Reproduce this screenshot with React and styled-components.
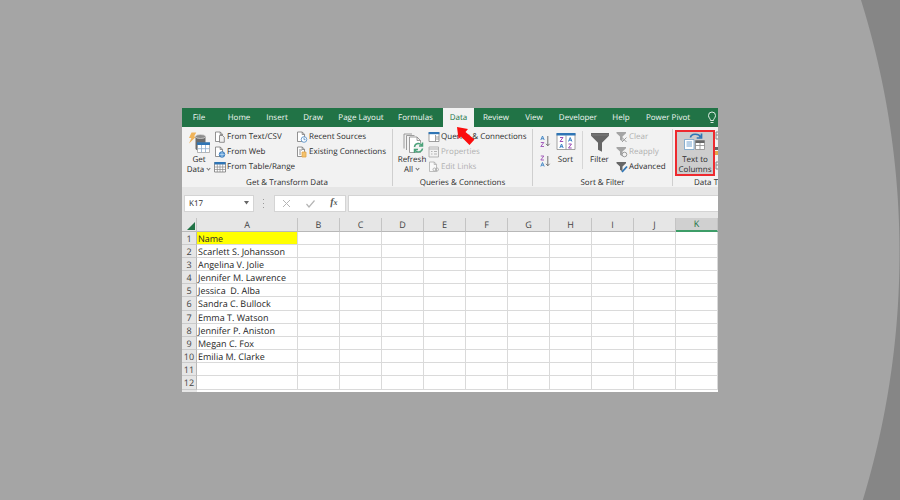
import React from "react";
import styled, { createGlobalStyle, css } from "styled-components";

const GlobalStyle = createGlobalStyle`
  * { box-sizing: border-box; }
  body { margin: 0; background: #a5a5a5; font-family: "Open Sans", "Noto Sans", sans-serif; text-rendering: geometricPrecision; }
  button, input, select { font: inherit; color: inherit; text-rendering: inherit; margin: 0; padding: 0; border: 0; background: none; }
`;

const Page = styled.main`
  min-height: 100vh;
  padding: 108px 182px;
  background: radial-gradient(circle at calc(100% - 850px) 253px, #a5a5a5 849px, #868686 850px);
`;
const Workbook = styled.section`
  background: #fff;
  color: #2b2b2b;
  font-size: 8px;
  line-height: 10px;
  overflow: hidden;
`;

/* Ribbon tabs */
const TabBar = styled.nav`
  display: grid;
  grid-template-columns: 34fr 46fr 30fr 42fr 54fr 55fr 31fr 44fr 32fr 56fr 30fr 64fr 18fr;
  height: 19px;
  background: #217346;
`;
const Tab = styled.button`
  position: relative;
  display: flex;
  align-items: center;
  justify-content: center;
  white-space: nowrap;
  && { color: #f2f8f4; }
  ${(p) => p.$active && css`
    && { background: #f2f2f2; color: #217346; }
  `}
`;
const Pointer = styled.svg`
  position: absolute;
  z-index: 2;
  left: 13px;
  top: 18px;
  width: 20px;
  height: 20px;
`;

/* Ribbon */
const Ribbon = styled.div`
  display: grid;
  grid-template-columns: 211fr 140fr 140fr 45fr;
  height: 60px;
  padding-top: 2px;
  background: #f2f2f2;
`;
const Group = styled.section`
  display: flex;
  flex-direction: column;
  min-width: 0;
  height: 57px;
  border-right: 1px solid ${(p) => (p.$last ? "transparent" : "#cfcfcf")};
`;
const Tools = styled.div`
  display: flex;
  flex: none;
  height: 49px;
  padding-left: ${(p) => p.$inset || 0}px;
`;
const GroupLabel = styled.div`
  padding-left: ${(p) => p.$inset || 0}px;
  text-align: ${(p) => (p.$inset ? "left" : "center")};
  white-space: nowrap;
`;
const BigButton = styled.button`
  display: flex;
  flex: none;
  flex-direction: column;
  align-items: center;
  width: ${(p) => p.$w}px;
  height: 47px;
  && { padding-top: 2px; }
  white-space: nowrap;
  svg { width: 24px; height: 24px; flex: none; }
  ${(p) => p.$marked && css`
    && { background: #cdcdcd; margin-top: 2px; padding-top: 0; }
    height: 44px;
    outline: 2px solid #ee2a2f;
    outline-offset: -1px;
  `}
`;
const Stack = styled.div`
  display: flex;
  flex: none;
  flex-direction: column;
  width: ${(p) => p.$w}px;
`;
const SmallButton = styled.button`
  display: flex;
  align-items: center;
  gap: 1px;
  height: 15px;
  white-space: nowrap;
  && { color: ${(p) => (p.$off ? "#b0b0b0" : "inherit")}; }
  svg { width: 12px; height: 12px; flex: none; opacity: ${(p) => (p.$off ? 0.55 : 1)}; }
`;
const SortStack = styled.div`
  display: flex;
  flex: none;
  flex-direction: column;
  gap: 8px;
  width: 12px;
  padding-top: 6px;
`;
const IconButton = styled.button`
  display: flex;
  svg { width: 12px; height: 12px; }
`;
const Divider = styled.div`
  width: 1px;
  height: 38px;
  flex: none;
  margin: 2px 0 0 3px;
  background: #d6d6d6;
`;

/* Formula bar */
const FormulaBar = styled.div`
  display: flex;
  align-items: center;
  height: 31px;
  padding: 1px 0 0 2px;
  background: #e6e6e6;
`;
const NameBox = styled.label`
  display: flex;
  align-items: center;
  width: 70px;
  height: 17px;
  padding: 0 4px;
  background: #fff;
  border: 1px solid #d4d4d4;
  select { appearance: none; flex: 1; outline: none; height: 15px; line-height: 15px; }
  svg { width: 5px; height: 4px; }
`;
const Grip = styled.svg`
  width: 3px;
  height: 9px;
  margin: 0 9px 0 8px;
`;
const EntryButtons = styled.div`
  display: flex;
  align-items: center;
  justify-content: space-around;
  width: 72px;
  height: 17px;
  margin-right: 2px;
  background: #fff;
  border: 1px solid #d4d4d4;
  svg { display: block; width: 9px; height: 9px; }
`;
const FxButton = styled.button`
  && { font: italic bold 10px/12px "Liberation Serif", serif; color: #555; }
  small { font-size: 8px; }
`;
const FormulaInput = styled.input`
  flex: 1;
  min-width: 0;
  height: 17px;
  && { background: #fff; border: 1px solid #d4d4d4; border-right: 0; }
`;

/* Worksheet */
const Sheet = styled.table`
  width: 100%;
  table-layout: fixed;
  border-collapse: separate;
  border-spacing: 0;
  color: #262626;
  font-size: 9px;
`;
const IndexCol = styled.col`width: 15px;`;
const NameCol = styled.col`width: 101px;`;
const ColumnHead = styled.th`
  height: 14px;
  padding: 0;
  font-weight: 400;
  background: ${(p) => (p.$selected ? "#d0d0d0" : "#e6e6e6")};
  color: ${(p) => (p.$selected ? "#217346" : "#444")};
  border-right: 1px solid #c4c4c4;
  border-bottom: 1px solid #b8b8b8;
  ${(p) => p.$selected && css`border-bottom: 2px solid #3d9d68;`}
  svg { display: block; width: 8px; height: 8px; margin: 3px 0 0 5px; }
`;
const RowHead = styled.th`
  height: ${(p) => (p.$tall ? 14 : 13)}px;
  padding: 1px 0 0;
  font-weight: 400;
  background: #e6e6e6;
  color: #444;
  border-right: 1px solid #b8b8b8;
  border-bottom: 1px solid #cbcbcb;
`;
const Cell = styled.td`
  padding: 1px 1px 0;
  white-space: pre;
  background: ${(p) => (p.$fill ? "#ffff00" : "#fff")};
  border-right: 1px solid #dadada;
  border-bottom: 1px solid #dadada;
`;
const SheetEdge = styled.div`
  height: 2px;
  background: linear-gradient(90deg, #e6e6e6 15px, #fff 15px);
`;

/* Icons */
const Doc = ({ children }) => (
  <svg viewBox="0 0 12 12" fill="none" stroke="#777" strokeWidth="0.8">
    <path d="M1.5 1h4.8l2.2 2.3v7.2h-7zM6.2 1v2.5h2.3" fill="#fff" />
    {children}
  </svg>
);
const CsvIcon = () => <Doc><path d="M5.5 4.5h3l1.8 1.8v5H5.5z" fill="#eee" /></Doc>;
const WebIcon = () => (
  <Doc><circle cx="8" cy="8.5" r="2.8" fill="#5b9bd5" stroke="#3274b5" /><path d="M5.5 8.5h5M8 6v5" stroke="#e4f0fa" strokeWidth="0.5" /></Doc>
);
const RecentIcon = () => (
  <Doc><circle cx="8" cy="8.5" r="2.8" fill="#fff" stroke="#4a88c4" /><path d="M8 6.8v1.9h1.5" stroke="#4a88c4" /></Doc>
);
const ExistingIcon = () => (
  <Doc><path d="M3 4h3M3 6h2M3 8h2" /><path d="M6 6h4v5H6z" fill="#f3c26d" stroke="#e3a64a" /></Doc>
);
const TableIcon = () => (
  <svg viewBox="0 0 12 12" fill="none"><path d="M.5 1.5h11V11H.5z" fill="#fff" stroke="#777" strokeWidth=".8" /><path d="M.5 1h11v2.5H.5z" fill="#2f75b5" /><path d="M3.3 3v8M6 3v8M8.7 3v8M.5 6h11M.5 8.5h11" stroke="#888" strokeWidth=".7" /></svg>
);
const QueriesIcon = () => (
  <svg viewBox="0 0 12 12" fill="none"><path d="M1 1.5h10v9H1zM7.5 4v6.5M8 6h3M8 8h3" fill="#fff" stroke="#888" strokeWidth=".8" /><path d="M.6 1h10.8v2.2H.6z" fill="#2f75b5" /></svg>
);
const PropertiesIcon = () => (
  <svg viewBox="0 0 12 12" fill="none" stroke="#777" strokeWidth=".9"><path d="M1 1h9.5v10H1zM1 3h9.5M3 5.5h1.5M6 5.5h3M3 8h1.5M6 8h3" /></svg>
);
const LinksIcon = () => <Doc><path d="M5 8.5c0-2 3-2 3 0s-3 2-3 0M7.5 8.5c0-2 3-2 3 0s-3 2-3 0" strokeWidth="1" /></Doc>;
const FunnelIcon = ({ children }) => (
  <svg viewBox="0 0 12 12" fill="none"><path d="M.5 1H10v1.3L6.5 5.5v5L4 8.8V5.5L.5 2.3z" fill="#666" />{children}</svg>
);
const GetDataIcon = () => (
  <svg viewBox="0 0 24 23" fill="none">
    <path d="M4.5 1h4.8L7 5h2.3L2 12l2.4-5.5H2z" fill="#f0b45a" />
    <path d="M8.5 5v12c0 3 10 3 10 0V5z" fill="#6b6b6b" /><ellipse cx="13.5" cy="5" rx="5" ry="2" fill="#8d8d8d" stroke="#ddd" strokeWidth=".7" />
    <path d="M10.500 11.500h12V21h-12z" fill="#fff" stroke="#999" strokeWidth=".7" /><path d="M10 10.800h13v2.700H10z" fill="#2f75b5" />
    <path d="M14.500 13.500V21M18.500 13.500V21M10.500 17.200h12" stroke="#8baed0" strokeWidth=".8" />
  </svg>
);
const RefreshIcon = () => (
  <svg viewBox="0 0 24 23" fill="none" stroke="#858585" strokeWidth=".8">
    <path d="M4 17V2.500h8" /><path d="M6.500 18.500V4h8" />
    <path d="M9.500 5.500h7.500l3.500 3.500v12h-11zM17 5.500V9h3.500" fill="#fff" />
    <circle cx="18.500" cy="16" r="5" fill="#f2f2f2" stroke="none" />
    <path d="M14.500 15.500c.5-4.500 6-4.500 7.500-1.500M22.500 11v3.500H19M22.500 17c-.5 4-6 4.500-7.500 1.500M14.500 21.500V18H18" stroke="#4ba27a" strokeWidth="1.500" />
  </svg>
);
const letterA = "l1.700-4 1.700 4m-2.800-1.300h2.200";
const letterZ = "h3l-3 4h3.200";
const SortIcon = () => (
  <svg viewBox="0 0 24 23" fill="none">
    <path d="M3 2h18v16H3zM12 4v14" fill="#fff" stroke="#8c8c8c" strokeWidth=".8" /><path d="M2.500 1.500h19V4h-19z" fill="#2f75b5" />
    <path d={`M6 6${letterZ}M14.500 12.500${letterZ}`} stroke="#9b4fb5" /><path d={`M5.800 16.500${letterA}M14.500 10${letterA}`} stroke="#3b82c4" />
  </svg>
);
const OrderIcon = ({ desc }) => (
  <svg viewBox="0 0 12 12" fill="none" strokeWidth=".9">
    <path d={`M.8 ${desc ? 11.5 : 5}${letterA}`} stroke="#3b82c4" /><path d={`M.8 ${desc ? 1 : 7.5}${letterZ}`} stroke="#9b4fb5" />
    <path d="M7.800 1v9.500M6 8.800l1.800 2 1.800-2" stroke="#666" />
  </svg>
);
const FilterIcon = () => (
  <svg viewBox="0 0 24 23"><path d="M3 1.500h18v2.700l-7 7v9l-4-2v-7l-7-7z" fill="#666" /><path d="M3 3.500h18" stroke="#888" strokeWidth=".7" /></svg>
);
const SplitIcon = () => (
  <svg viewBox="0 0 24 23" fill="none">
    <path d="M1.500 8h9.500v10H1.500z" fill="#fff" stroke="#6f9fc8" strokeWidth=".8" /><path d="M3.500 10.500h5.500M3.500 12.500h5.500M3.500 14.500h5.500" stroke="#4b8bc4" strokeWidth=".8" />
    <path d="M12.500 9h9v9h-9zM17 11v7M12.500 14h9" fill="#fff" stroke="#8b8b8b" strokeWidth=".8" /><path d="M12.500 9h9v2.500h-9z" fill="#666" />
    <path d="M7.500 6c.5-4 8-4.500 10-.5M18.500 2v4.500h-4.800" stroke="#2f75b5" strokeWidth="1.700" />
  </svg>
);
const Caret = styled.span`
  display: inline-block;
  width: 3px;
  height: 3px;
  margin: 0 1px 2px 3px;
  border: solid #777;
  border-width: 0 1px 1px 0;
  rotate: 45deg;
`;
const PeekIcons = styled.svg`
  width: 4px;
  height: 45px;
  flex: none;
`;
const Bulb = styled.svg`
  width: 10px;
  height: 13px;
  flex: none;
  margin-left: 6px;
`;

const tabs = ["File", "Home", "Insert", "Draw", "Page Layout", "Formulas", "Data", "Review", "View", "Developer", "Help", "Power Pivot"];
const columns = "ABCDEFGHIJK".split("");
const names = ["Name", "Scarlett S. Johansson", "Angelina V. Jolie", "Jennifer M. Lawrence", "Jessica  D. Alba", "Sandra C. Bullock", "Emma T. Watson", "Jennifer P. Aniston", "Megan C. Fox", "Emilia M. Clarke", "", ""];

export default function App() {
  return (
    <Page>
      <GlobalStyle />
      <Workbook>
        <TabBar>
          {tabs.map((t) => (
            <Tab key={t} $active={t === "Data"}>
              {t}
              {t === "Data" && (
                <Pointer viewBox="0 0 20 20"><path d="M1 1l11 2-2.500 3 9 7.500-5 5.500-8.500-8.500L2.500 13z" fill="#fb0d0d" /></Pointer>
              )}
            </Tab>
          ))}
          <Tab aria-label="Tell me">
            <Bulb viewBox="0 0 10 13" fill="none" stroke="#f2f8f4" strokeWidth=".9"><path d="M3.500 9.500c0-2-2-2.500-2-5a3.500 3.500 0 0 1 7 0c0 2.500-2 3-2 5zM3.500 11.500h3" /></Bulb>
          </Tab>
        </TabBar>

        <Ribbon>
          <Group>
            <Tools $inset={2}>
              <BigButton $w={30}><GetDataIcon />Get<span>Data<Caret /></span></BigButton>
              <Stack $w={82}>
                <SmallButton><CsvIcon />From Text/CSV</SmallButton>
                <SmallButton><WebIcon />From Web</SmallButton>
                <SmallButton><TableIcon />From Table/Range</SmallButton>
              </Stack>
              <Stack $w={94}>
                <SmallButton><RecentIcon />Recent Sources</SmallButton>
                <SmallButton><ExistingIcon />Existing Connections</SmallButton>
              </Stack>
            </Tools>
            <GroupLabel>Get &amp; Transform Data</GroupLabel>
          </Group>
          <Group>
            <Tools $inset={3}>
              <BigButton $w={32}><RefreshIcon />Refresh<span>All<Caret /></span></BigButton>
              <Stack $w={100}>
                <SmallButton><QueriesIcon />Queries &amp; Connections</SmallButton>
                <SmallButton $off><PropertiesIcon />Properties</SmallButton>
                <SmallButton $off><LinksIcon />Edit Links</SmallButton>
              </Stack>
            </Tools>
            <GroupLabel>Queries &amp; Connections</GroupLabel>
          </Group>
          <Group>
            <Tools $inset={7}>
              <SortStack>
                <IconButton aria-label="Sort A to Z"><OrderIcon /></IconButton>
                <IconButton aria-label="Sort Z to A"><OrderIcon desc /></IconButton>
              </SortStack>
              <BigButton $w={27}><SortIcon />Sort</BigButton>
              <Divider />
              <BigButton $w={33}><FilterIcon />Filter</BigButton>
              <Stack $w={54}>
                <SmallButton $off><FunnelIcon><path d="M6 6.500l4.500 4.500M10.500 6.500L6 11" stroke="#555" /></FunnelIcon>Clear</SmallButton>
                <SmallButton $off><FunnelIcon><circle cx="8.500" cy="8.500" r="2.300" stroke="#555" fill="#f2f2f2" /></FunnelIcon>Reapply</SmallButton>
                <SmallButton><FunnelIcon><path d="M6 11l5-5.500" stroke="#2f75b5" strokeWidth="1.800" /></FunnelIcon>Advanced</SmallButton>
              </Stack>
            </Tools>
            <GroupLabel>Sort &amp; Filter</GroupLabel>
          </Group>
          <Group $last>
            <Tools $inset={3}>
              <BigButton $w={38} $marked><SplitIcon />Text to<span>Columns</span></BigButton>
              <PeekIcons viewBox="0 0 4 45" fill="none"><path d="M4 3H2v7h2M2 6h2M4 33H2v7h2M2 36h2" stroke="#888" /><path d="M1 18h3v3H1z" fill="#666" /><path d="M1 22h3v4H1z" fill="#e3a64a" /></PeekIcons>
            </Tools>
            <GroupLabel $inset={21}>Data T</GroupLabel>
          </Group>
        </Ribbon>

        <FormulaBar>
          <NameBox>
            <select aria-label="Name box" defaultValue="K17"><option>K17</option></select>
            <svg viewBox="0 0 5 4"><path d="M0 0h5L2.500 3.500z" fill="#666" /></svg>
          </NameBox>
          <Grip viewBox="0 0 3 9" fill="#999"><path d="M1 0h1v1H1zM1 4h1v1H1zM1 8h1v1H1z" /></Grip>
          <EntryButtons>
            <button aria-label="Cancel"><svg viewBox="0 0 9 9"><path d="M1 1l7 7M8 1L1 8" stroke="#b5b5b5" /></svg></button>
            <button aria-label="Enter"><svg viewBox="0 0 9 9" fill="none"><path d="M.5 5l2.500 3 5.500-6.500" stroke="#b5b5b5" strokeWidth="1.200" /></svg></button>
            <FxButton aria-label="Insert function">f<small>x</small></FxButton>
          </EntryButtons>
          <FormulaInput aria-label="Formula" />
        </FormulaBar>

        <Sheet>
          <colgroup><IndexCol /><NameCol />{columns.slice(1).map((c) => <col key={c} />)}</colgroup>
          <thead>
            <tr>
              <ColumnHead aria-label="Select all"><svg viewBox="0 0 8 8"><path d="M8 0v8H0z" fill="#217346" /></svg></ColumnHead>
              {columns.map((c) => <ColumnHead key={c} scope="col" $selected={c === "K"}>{c}</ColumnHead>)}
            </tr>
          </thead>
          <tbody>
            {names.map((n, r) => (
              <tr key={r}>
                <RowHead scope="row" $tall={r % 6 === 5}>{r + 1}</RowHead>
                {columns.map((c, i) => <Cell key={c} $fill={r === 0 && i === 0}>{i === 0 ? n : ""}</Cell>)}
              </tr>
            ))}
          </tbody>
        </Sheet>
        <SheetEdge />
      </Workbook>
    </Page>
  );
}
